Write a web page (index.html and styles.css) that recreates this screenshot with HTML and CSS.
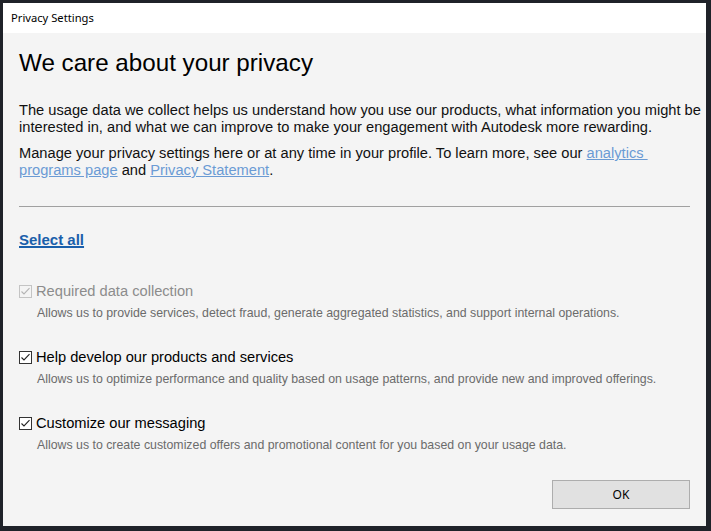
FILE: index.html
```html
<!DOCTYPE html>
<html lang="en">
<head>
<meta charset="utf-8">
<title>Privacy Settings</title>
<link rel="stylesheet" href="styles.css">
</head>
<body>
<div class="window">
  <div class="titlebar">Privacy Settings</div>
  <div class="content">
    <h1 class="heading">We care about your privacy</h1>
    <p class="para">The usage data we collect helps us understand how you use our products, what information you might be<br>interested in, and what we can improve to make your engagement with Autodesk more rewarding.</p>
    <p class="para">Manage your privacy settings here or at any time in your profile. To learn more, see our <a class="link" href="#">analytics&nbsp;<br>programs page</a> and <a class="link" href="#">Privacy Statement</a>.</p>
    <hr class="sep">
    <a class="select-all" href="#">Select all</a>
    <div class="options">
      <div class="option">
        <div class="opt-row disabled">
          <svg class="cb" width="13" height="13" viewBox="0 0 13 13"><rect x="0.5" y="0.5" width="12" height="12" fill="#f4f4f4" stroke="#c4c4c4"/><path d="M2.5 6.5 L5 9 L10.5 3.2" fill="none" stroke="#b4b4b4" stroke-width="1.1"/></svg>
          <span class="opt-label">Required data collection</span>
        </div>
        <div class="opt-desc">Allows us to provide services, detect fraud, generate aggregated statistics, and support internal operations.</div>
      </div>
      <div class="option">
        <div class="opt-row">
          <svg class="cb" width="13" height="13" viewBox="0 0 13 13"><rect x="0.5" y="0.5" width="12" height="12" fill="#ffffff" stroke="#333333"/><path d="M2.5 6.5 L5 9 L10.5 3.2" fill="none" stroke="#222222" stroke-width="1.1"/></svg>
          <span class="opt-label">Help develop our products and services</span>
        </div>
        <div class="opt-desc">Allows us to optimize performance and quality based on usage patterns, and provide new and improved offerings.</div>
      </div>
      <div class="option">
        <div class="opt-row">
          <svg class="cb" width="13" height="13" viewBox="0 0 13 13"><rect x="0.5" y="0.5" width="12" height="12" fill="#ffffff" stroke="#333333"/><path d="M2.5 6.5 L5 9 L10.5 3.2" fill="none" stroke="#222222" stroke-width="1.1"/></svg>
          <span class="opt-label">Customize our messaging</span>
        </div>
        <div class="opt-desc">Allows us to create customized offers and promotional content for you based on your usage data.</div>
      </div>
    </div>
    <div class="footer">
      <button class="ok-btn" type="button">OK</button>
    </div>
  </div>
</div>
</body>
</html>
```
FILE: styles.css
```css
html, body {
  margin: 0;
  padding: 0;
  height: 100%;
}
body {
  background: #1f2229;
  font-family: "Liberation Sans", Arial, sans-serif;
  color: #000;
}
.window {
  box-sizing: border-box;
  height: 531px;
  width: 711px;
  padding: 3px 5px 5px 3px;
  display: flex;
  flex-direction: column;
}
.titlebar {
  height: 30px;
  background: #ffffff;
  font-family: "Noto Sans", "Open Sans", sans-serif;
  font-size: 11.2px;
  line-height: 30px;
  padding-left: 8px;
  color: #000;
  flex: none;
}
.content {
  flex: 1;
  background: #f4f4f4;
  padding: 16px 0 0 16px;
  display: flex;
  flex-direction: column;
}
.heading {
  margin: 0;
  font-weight: normal;
  font-size: 24.2px;
  line-height: 28px;
  color: #000;
}
.para {
  margin: 0;
  font-size: 14.67px;
  line-height: 17px;
  white-space: nowrap;
  color: #111;
}
.heading + .para {
  margin-top: 25px;
}
.para + .para {
  margin-top: 9px;
}
.link {
  color: #6b9bd4;
  text-decoration: underline;
}
.sep {
  margin: 27px 0 0 0;
  width: 671px;
  border: 0;
  border-top: 1px solid #a0a0a0;
  height: 0;
}
.select-all {
  margin-top: 24px;
  align-self: flex-start;
  font-weight: bold;
  font-size: 15px;
  line-height: 17px;
  color: #1a5fab;
  text-decoration: underline;
  text-decoration-thickness: 2px;
}
.options {
  margin-top: 33px;
  display: flex;
  flex-direction: column;
  gap: 24px;
}
.option {
  display: flex;
  flex-direction: column;
}
.opt-row {
  display: flex;
  align-items: center;
  gap: 4px;
  height: 20px;
}
.cb {
  flex: none;
}
.opt-label {
  font-size: 14.67px;
  line-height: 20px;
  color: #000;
}
.disabled .opt-label {
  color: #8c8c8c;
}
.opt-desc {
  margin-top: 2px;
  padding-left: 18px;
  font-size: 12.33px;
  line-height: 20px;
  color: #6b6b6b;
  white-space: nowrap;
}
.footer {
  margin-top: auto;
  display: flex;
  justify-content: flex-end;
  padding: 0 16px 17px 0;
}
.ok-btn {
  width: 138px;
  height: 29px;
  background: #e1e1e1;
  border: 1px solid #adadad;
  font-family: "Noto Sans", "Open Sans", sans-serif;
  font-size: 12px;
  color: #000;
  padding: 0;
}
```
